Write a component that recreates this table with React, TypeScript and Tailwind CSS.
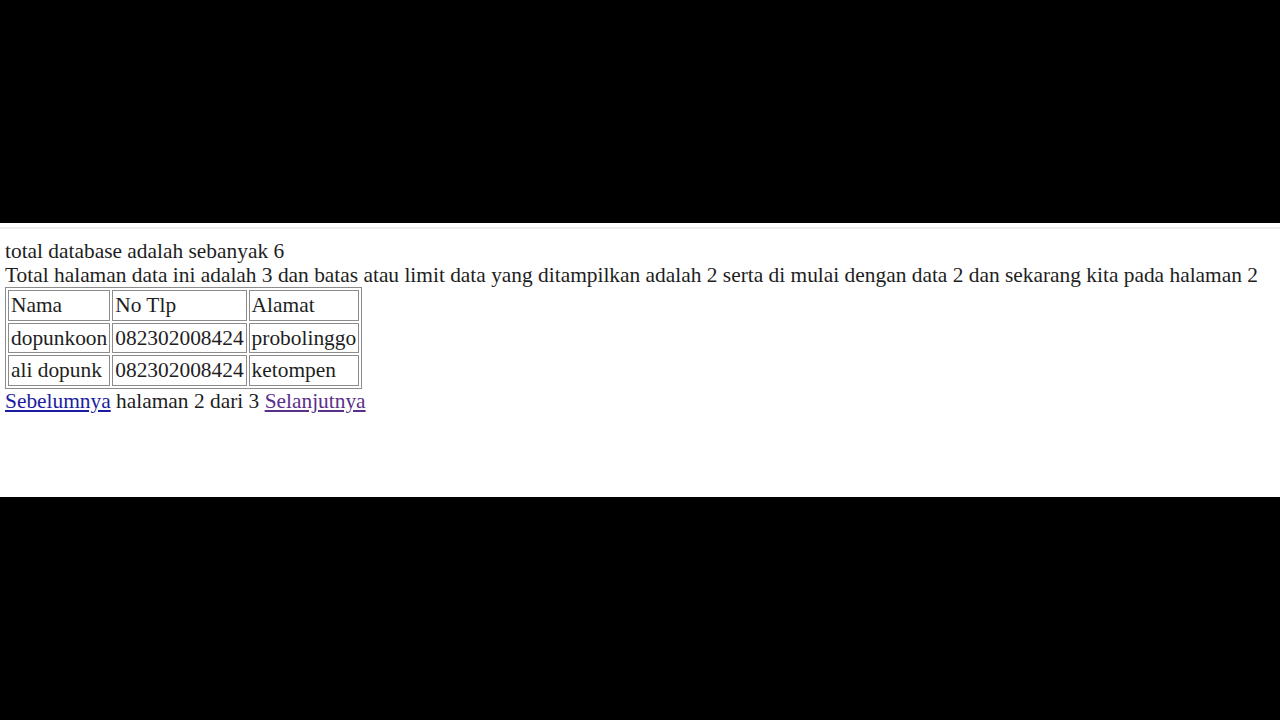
export default function App() {
  const rows = [
    ["Nama", "No Tlp", "Alamat"],
    ["dopunkoon", "082302008424", "probolinggo"],
    ["ali dopunk", "082302008424", "ketompen"],
  ];

  return (
    <div className="flex h-[720px] w-[1280px] flex-col bg-black">
      <div className="h-[223px] shrink-0 bg-black" />

      {/* halaman web */}
      <div className="h-[274px] shrink-0 bg-white font-['Liberation_Serif',serif] text-[21.4px] leading-[24px] text-[#1e1e1e]">
        <div className="mt-[4px] h-[2px] bg-[#ececec]" />
        <div className="px-[5px] pt-[10px]">
          <p>total database adalah sebanyak 6</p>
          <p className="whitespace-nowrap">
            Total halaman data ini adalah 3 dan batas atau limit data yang ditampilkan adalah 2 serta di mulai dengan data 2 dan sekarang kita pada halaman 2
          </p>
          <table className="border-separate border-spacing-[2px] border border-[#8c8c8c]">
            <tbody>
              {rows.map((r, i) => (
                <tr key={i}>
                  {r.map((c, j) => (
                    <td
                      key={j}
                      className="border border-[#8c8c8c] px-[2px] py-[2px] leading-[24.6px] whitespace-nowrap"
                    >
                      {c}
                    </td>
                  ))}
                </tr>
              ))}
            </tbody>
          </table>
          <p>
            <a href="#" className="text-[#1c1ca0] underline">
              Sebelumnya
            </a>{" "}
            halaman 2 dari 3{" "}
            <a href="#" className="text-[#5a2f8a] underline">
              Selanjutnya
            </a>
          </p>
        </div>
      </div>

      <div className="flex-1 bg-black" />
    </div>
  );
}
